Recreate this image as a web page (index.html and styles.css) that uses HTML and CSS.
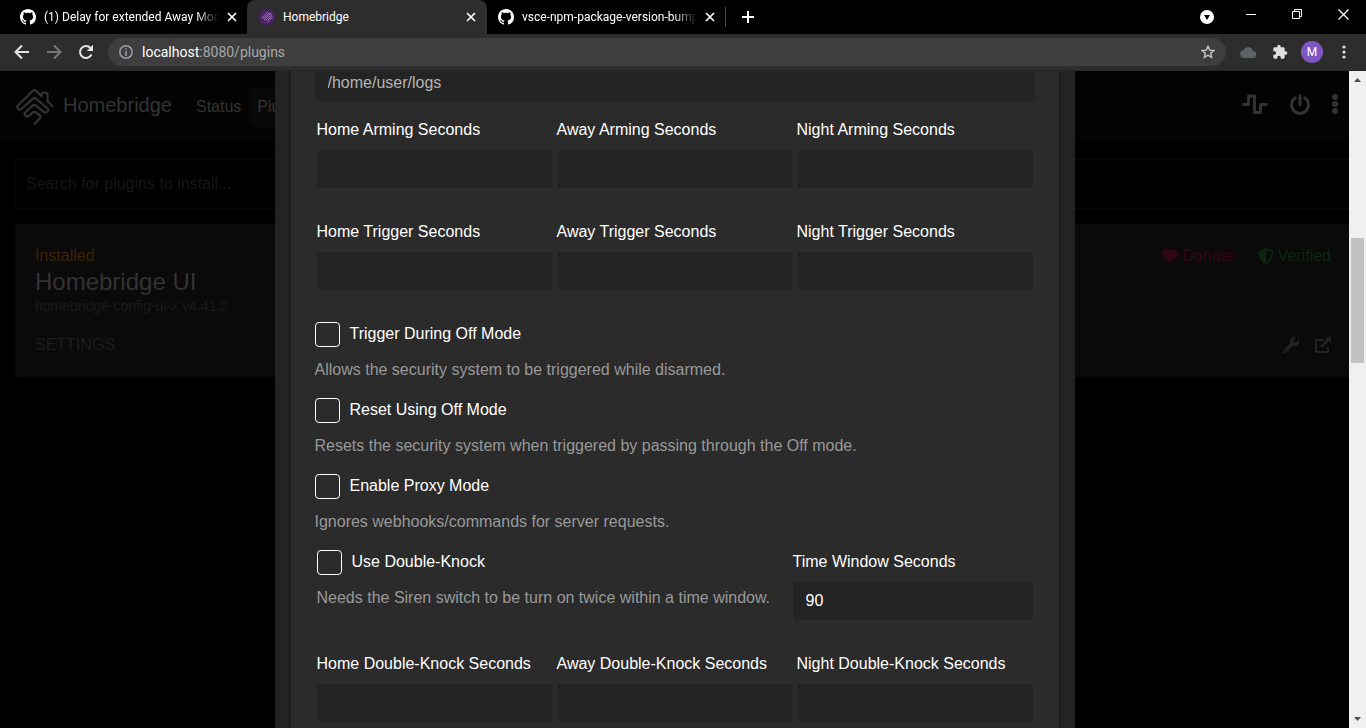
FILE: index.html
```html
<!DOCTYPE html>
<html lang="en">
<head>
<meta charset="utf-8">
<title>Homebridge</title>
<link rel="stylesheet" href="styles.css">
</head>
<body>
<svg class="defs" width="0" height="0" aria-hidden="true">
  <symbol id="github" viewBox="0 0 16 16"><path d="M8 0C3.58 0 0 3.58 0 8c0 3.54 2.29 6.53 5.47 7.59.4.07.55-.17.55-.38 0-.19-.01-.82-.01-1.49-2.01.37-2.53-.49-2.69-.94-.09-.23-.48-.94-.82-1.13-.28-.15-.68-.52-.01-.53.63-.01 1.08.58 1.23.82.72 1.21 1.87.87 2.33.66.07-.52.28-.87.51-1.07-1.78-.2-3.64-.89-3.64-3.95 0-.87.31-1.59.82-2.15-.08-.2-.36-1.02.08-2.12 0 0 .67-.21 2.2.82.64-.18 1.32-.27 2-.27s1.36.09 2 .27c1.53-1.04 2.2-.82 2.2-.82.44 1.1.16 1.92.08 2.12.51.56.82 1.27.82 2.15 0 3.07-1.87 3.75-3.65 3.95.29.25.54.73.54 1.48 0 1.07-.01 1.93-.01 2.2 0 .21.15.46.55.38A8.01 8.01 0 0 0 16 8c0-4.42-3.58-8-8-8z" fill="currentColor"/></symbol>
  <symbol id="close" viewBox="0 0 10 10"><path d="M1 1l8 8M9 1L1 9" stroke="currentColor" stroke-width="1.7" fill="none"/></symbol>
  <symbol id="homebridge" viewBox="0 0 38 38"><path d="M36.5 18.3L31.5 13.2V6.8Q31.5 4.7 29.4 4.7H27.6Q25.5 4.7 25.5 6.8V8.3M25.5 8.3L20.2 3Q18.4 1.2 16.6 3L2.2 17.2Q.3 19 2.1 20.8Q4 22.6 5.8 20.8L16.6 10.9Q18.4 9.2 20.2 10.9L31.2 20.2Q33.2 22 31.4 23.8Q29.7 25.4 27.7 23.8L20.2 17.6Q18.4 16 16.6 17.6L9.6 24Q7.7 25.8 9.4 27.6Q11.2 29.3 13.1 27.6L16.6 24.6Q18.4 23 20.2 24.6L23.7 27.4Q25.3 28.8 23.7 30.5L18.6 36" fill="none" stroke="currentColor" stroke-width="2.2" stroke-linecap="round" stroke-linejoin="round"/></symbol>
</svg>

<div class="browser">
  <header class="tabstrip">
    <div class="tab">
      <svg class="favicon"><use href="#github"/></svg>
      <span class="tab-title faded">(1) Delay for extended Away Mod</span>
      <button class="tab-close" aria-label="Close tab"><svg><use href="#close"/></svg></button>
    </div>
    <div class="tab tab-active">
      <svg class="favicon" viewBox="0 0 16 16"><circle cx="8" cy="8" r="8" fill="#4b2167"/><svg x="3" y="3" width="11" height="11" class="favicon-mark"><use href="#homebridge"/></svg></svg>
      <span class="tab-title">Homebridge</span>
      <button class="tab-close" aria-label="Close tab"><svg><use href="#close"/></svg></button>
    </div>
    <div class="tab">
      <svg class="favicon"><use href="#github"/></svg>
      <span class="tab-title faded">vsce-npm-package-version-bump</span>
      <button class="tab-close" aria-label="Close tab"><svg><use href="#close"/></svg></button>
    </div>
    <button class="new-tab" aria-label="New tab"><svg width="12" height="12"><path d="M6 0v12M0 6h12" stroke="#fff" stroke-width="2"/></svg></button>
    <div class="window-controls">
      <button aria-label="Search tabs"><svg width="14" height="14"><circle cx="7" cy="7" r="7" fill="#fff"/><path d="M4 5h6L7 10z" fill="#000"/></svg></button>
      <button aria-label="Minimize"><svg width="10" height="10"><path d="M0 5.500h10" stroke="#fff"/></svg></button>
      <button aria-label="Restore"><svg width="10" height="10"><path d="M.5 2.500h7v7h-7zM2.500 2.500v-2h7v7h-2" fill="none" stroke="#fff"/></svg></button>
      <button aria-label="Close window"><svg width="11" height="11"><path d="M.5.5l10 10M10.500.5l-10 10" stroke="#fff" stroke-width="1.200"/></svg></button>
    </div>
  </header>

  <div class="toolbar">
    <button class="tool" aria-label="Back"><svg width="16" height="16"><path d="M15 8H2M8 1.500L1.500 8 8 14.500" fill="none" stroke="#e4e4e4" stroke-width="2"/></svg></button>
    <button class="tool" aria-label="Forward"><svg width="16" height="16"><path d="M1 8h13M8 1.500L14.500 8 8 14.500" fill="none" stroke="#777" stroke-width="2"/></svg></button>
    <button class="tool" aria-label="Reload"><svg width="16" height="16"><path d="M13.500 10.500A6 6 0 1 1 12.500 4" fill="none" stroke="#e4e4e4" stroke-width="2"/><path d="M15 .8V7H8.800z" fill="#e4e4e4"/></svg></button>
    <div class="omnibox">
      <svg width="14" height="14"><circle cx="7" cy="7" r="6.200" fill="none" stroke="#9aa0a6" stroke-width="1.500"/><path d="M7 6v5M7 3.200v1.600" stroke="#9aa0a6" stroke-width="1.500"/></svg>
      <span class="url"><span class="host">localhost</span>:8080/plugins</span>
      <button aria-label="Bookmark this tab"><svg width="14" height="14" viewBox="0 0 14 14"><path d="M7 1.300l1.700 3.800 4.100.4-3.100 2.700.9 4.100L7 10.200l-3.600 2.100.9-4.100L1.200 5.500l4.100-.4z" fill="none" stroke="#c8c8c8" stroke-width="1.400"/></svg></button>
    </div>
    <div class="extensions">
      <button class="tool" aria-label="Cloud extension"><svg width="16" height="12" viewBox="0 0 16 12"><path d="M4 12a4 4 0 0 1-.6-7.900A5 5 0 0 1 12.800 5 3.500 3.500 0 0 1 12.500 12z" fill="#5f6368"/></svg></button>
      <button class="tool" aria-label="Extensions"><svg width="16" height="16" viewBox="0 0 24 24"><path d="M20.500 11H19V7a2 2 0 0 0-2-2h-4V3.500a2.500 2.500 0 0 0-5 0V5H4a2 2 0 0 0-2 2v3.800h1.500a2.700 2.700 0 0 1 0 5.400H2V20a2 2 0 0 0 2 2h3.800v-1.500a2.700 2.700 0 0 1 5.400 0V22H17a2 2 0 0 0 2-2v-4h1.500a2.500 2.500 0 0 0 0-5z" fill="#e0e0e0"/></svg></button>
      <button class="tool avatar" aria-label="Profile">M</button>
      <button class="tool" aria-label="Menu"><svg width="4" height="14"><circle cx="2" cy="2" r="1.600" fill="#e0e0e0"/><circle cx="2" cy="7" r="1.600" fill="#e0e0e0"/><circle cx="2" cy="12" r="1.600" fill="#e0e0e0"/></svg></button>
    </div>
  </div>

  <div class="viewport">
    <div class="page">
      <nav class="navbar">
        <svg class="brand-mark"><use href="#homebridge"/></svg>
        <a class="brand" href="#">Homebridge</a>
        <a class="nav-link" href="#">Status</a>
        <a class="nav-link nav-current" href="#">Plugins</a>
        <div class="nav-icons">
          <button aria-label="Logs"><svg width="26" height="20"><path d="M1.500 10.500h5V2h6v16.500h6v-8h6" fill="none" stroke="currentColor" stroke-width="2.800" stroke-linejoin="round" stroke-linecap="round"/></svg></button>
          <button aria-label="Restart"><svg width="20" height="21"><path d="M5.400 3.800a8.500 8.500 0 1 0 9.200 0" fill="none" stroke="currentColor" stroke-width="2.800" stroke-linecap="round"/><path d="M10 1.500v9" stroke="currentColor" stroke-width="3" stroke-linecap="round"/></svg></button>
          <button aria-label="More"><svg width="6" height="20"><circle cx="3" cy="3" r="3" fill="currentColor"/><circle cx="3" cy="10" r="3" fill="currentColor"/><circle cx="3" cy="17" r="3" fill="currentColor"/></svg></button>
        </div>
      </nav>
      <main class="content">
        <input class="search" type="text" placeholder="Search for plugins to install..." aria-label="Search for plugins to install">
        <article class="plugin">
          <div class="plugin-info">
            <span class="installed">Installed</span>
            <h2>Homebridge UI</h2>
            <span class="package">homebridge-config-ui-x v4.41.2</span>
            <a class="settings" href="#">SETTINGS</a>
          </div>
          <div class="plugin-side">
            <div class="badges">
              <a class="donate" href="#"><svg width="16" height="16" viewBox="0 0 512 512"><path d="M462 62c-55-46-136-38-186 14l-20 20-20-20C186 24 105 16 50 62c-63 54-66 150-10 208l193 200c12 13 32 13 45 0l193-200c57-58 54-154-9-208z" fill="currentColor"/></svg>Donate</a>
              <span class="verified"><svg width="16" height="16" viewBox="0 0 512 512"><path d="M466 83L274 3c-11-4-25-4-36 0L46 83c-18 8-30 25-30 45 0 198 114 335 222 380 11 5 25 5 36 0 87-36 222-159 222-380 0-20-12-37-30-45zM256 446V66l176 73c-4 152-82 263-176 307z" fill="currentColor"/></svg>Verified</span>
            </div>
            <div class="actions">
              <button aria-label="Plugin tools"><svg width="16" height="16" viewBox="0 0 512 512"><path d="M508 110c-2-9-13-12-20-5l-74 74-68-11-11-68 74-74c7-7 4-18-5-20A144 144 0 0 0 233 193L19 407a64 64 0 1 0 91 91l213-213a144 144 0 0 0 185-175zM64 472a24 24 0 1 1 0-48 24 24 0 0 1 0 48z" fill="currentColor"/></svg></button>
              <button aria-label="Open plugin page"><svg width="16" height="16"><path d="M9 3H1v12h12v-5" fill="none" stroke="currentColor" stroke-width="2"/><path d="M10 0h6v6l-2-2-7 7-2-2 7-7z" fill="currentColor"/></svg></button>
            </div>
          </div>
        </article>
      </main>

      <div class="modal-layer">
        <section class="modal" aria-label="Plugin settings">
          <form class="panel">
            <input class="field path" type="text" placeholder="/home/user/logs" aria-label="Log path">
            <div class="trio">
              <label>Home Arming Seconds<input class="field" type="text"></label>
              <label>Away Arming Seconds<input class="field" type="text"></label>
              <label>Night Arming Seconds<input class="field" type="text"></label>
            </div>
            <div class="trio">
              <label>Home Trigger Seconds<input class="field" type="text"></label>
              <label>Away Trigger Seconds<input class="field" type="text"></label>
              <label>Night Trigger Seconds<input class="field" type="text"></label>
            </div>
            <div class="option">
              <label class="check"><input type="checkbox">Trigger During Off Mode</label>
              <p>Allows the security system to be triggered while disarmed.</p>
            </div>
            <div class="option">
              <label class="check"><input type="checkbox">Reset Using Off Mode</label>
              <p>Resets the security system when triggered by passing through the Off mode.</p>
            </div>
            <div class="option">
              <label class="check"><input type="checkbox">Enable Proxy Mode</label>
              <p>Ignores webhooks/commands for server requests.</p>
            </div>
            <div class="knock">
              <div>
                <label class="check"><input type="checkbox">Use Double-Knock</label>
                <p>Needs the Siren switch to be turn on twice within a time window.</p>
              </div>
              <label>Time Window Seconds<input class="field" type="text" value="90"></label>
            </div>
            <div class="trio">
              <label>Home Double-Knock Seconds<input class="field" type="text"></label>
              <label>Away Double-Knock Seconds<input class="field" type="text"></label>
              <label>Night Double-Knock Seconds<input class="field" type="text"></label>
            </div>
          </form>
        </section>
      </div>
    </div>

    <div class="scrollbar" aria-hidden="true">
      <svg width="7" height="4"><path d="M0 4h7L3.500 0z" fill="#505050"/></svg>
      <div class="track"><div class="thumb"></div></div>
      <svg width="7" height="4"><path d="M0 0h7L3.500 4z" fill="#505050"/></svg>
    </div>
  </div>
</div>
</body>
</html>
```
FILE: styles.css
```css
* { box-sizing: border-box; }
body {
  margin: 0;
  background: #000;
  font: 16px/24px "Liberation Sans", Arial, sans-serif;
}
button {
  padding: 0;
  border: 0;
  background: none;
  color: inherit;
  font: inherit;
  display: flex;
  align-items: center;
  justify-content: center;
}
a { color: inherit; text-decoration: none; }
svg { display: block; flex: none; }
p, h2 { margin: 0; font-weight: 400; }
.defs { position: absolute; }

.browser { height: 100vh; display: flex; flex-direction: column; overflow: hidden; }

/* Tab strip */
.tabstrip {
  flex: none;
  display: flex;
  height: 34px;
  padding-left: 8px;
  background: #000;
  color: #fff;
  font: 12px/16px Roboto, "Noto Sans", sans-serif;
}
.tab {
  display: flex;
  align-items: center;
  width: 239px;
  padding: 0 7px 0 12px;
}
.tab-active { background: #2d2d2d; border-radius: 8px 8px 0 0; padding-right: 8px; width: 240px; }
.tab-active + .tab { width: 238px; padding-left: 11px; }
.favicon { width: 16px; height: 16px; margin-right: 8px; }
.favicon-mark { color: #cbb4d8; }
.tab-title { flex: 1; min-width: 0; overflow: hidden; white-space: nowrap; }
.faded {
  -webkit-mask-image: linear-gradient(to left, transparent, #000 24px);
  mask-image: linear-gradient(to left, transparent, #000 24px);
}
.tab-close { width: 16px; height: 16px; margin-left: 5px; }
.tab-close svg { width: 10px; height: 10px; }
.new-tab { width: 44px; height: 20px; margin-top: 7px; border-left: 1px solid #4a4a4a; }
.window-controls { margin-left: auto; display: flex; height: 28px; }
.window-controls button { width: 46px; }
.window-controls button:first-child { width: 42px; padding-top: 5px; }

/* Toolbar */
.toolbar {
  flex: none;
  display: flex;
  align-items: center;
  height: 37px;
  padding: 0 6px;
  background: #2d2d2d;
  border-bottom: 1px solid #262626;
}
.tool { width: 32px; height: 28px; }
.omnibox {
  flex: 1;
  display: flex;
  align-items: center;
  gap: 9px;
  height: 28px;
  margin: 0 6px;
  padding: 0 11px;
  border-radius: 14px;
  background: #3e3e3e;
  color: #a5a8ab;
  font: 14px/20px Roboto, "Noto Sans", sans-serif;
}
.url { flex: 1; }
.host { color: #fff; }
.extensions { display: flex; align-items: center; }
.avatar {
  width: 22px;
  height: 22px;
  margin: 0 5px;
  border-radius: 50%;
  background: #7e57c2;
  color: #fff;
  font: 12px/22px Roboto, sans-serif;
}

/* Plugin page, dimmed by the modal backdrop */
.viewport { flex: 1; min-height: 0; display: flex; }
.page { flex: 1; position: relative; overflow: hidden; background: #000; }
.navbar {
  display: flex;
  align-items: center;
  height: 71px;
  padding: 0 11px 0 16px;
  background: #030303;
  color: #333;
}
.brand-mark { width: 38px; height: 38px; margin-right: 9px; }
.brand { margin-right: 16px; padding-bottom: 4px; font-size: 20px; }
.nav-link { padding: 8px; }
.nav-current { background: #080808; }
.nav-icons { margin-left: auto; display: flex; align-items: center; gap: 22px; margin-bottom: 5px; }
.content { padding: 17px 0 0 15px; }
.search {
  display: block;
  width: 100%;
  height: 50px;
  padding: 0 10px;
  border: 1px solid #0a0a0a;
  border-right: 0;
  background: #000;
  color: #333;
  font: inherit;
}
.search::placeholder { color: #171717; opacity: 1; }
.plugin {
  display: flex;
  justify-content: space-between;
  margin-top: 15px;
  padding: 20px 18px 20px 20px;
  border-radius: 4px 0 0 4px;
  background: #0a0a0a;
}
.plugin-info, .plugin-side { display: flex; flex-direction: column; }
.installed { color: #3d2205; }
.plugin h2 { color: #333; font-size: 24px; line-height: 28px; }
.package { color: #1a1a1a; font-size: 14px; line-height: 21px; }
.settings { margin-top: 16px; color: #1d1d1d; }
.plugin-side { justify-content: space-between; align-items: flex-end; color: #222; }
.badges { display: flex; gap: 24px; }
.donate, .verified { display: flex; align-items: center; gap: 4px; }
.donate { color: #330614; }
.verified { color: #0d260f; }
.actions { display: flex; gap: 16px; height: 24px; }

/* Settings modal */
.modal-layer {
  position: absolute;
  inset: 0;
  display: flex;
  justify-content: center;
  overflow: hidden;
}
.modal {
  width: 800px;
  max-width: 100%;
  height: max-content;
  padding: 0 16px;
  background: #232323;
}
.panel {
  margin-top: -7px;
  padding: 0 24px 24px;
  background: #2b2b2b;
  box-shadow: 0 2px 6px rgba(0, 0, 0, .3);
  color: #fff;
}
.field {
  display: block;
  width: 100%;
  height: 38px;
  padding: 0 13px;
  border: 0;
  border-radius: 4px;
  background: #242424;
  color: #fff;
  font: inherit;
}
label .field { margin-top: 8px; }
.path { margin-bottom: 16px; }
.path::placeholder { color: #b5b5b5; opacity: 1; }
.trio {
  display: grid;
  grid-template-columns: repeat(3, 1fr);
  gap: 4px;
  padding: 0 2px;
  margin-bottom: 32px;
}
.check { display: flex; align-items: center; gap: 10px; height: 24px; }
.check input {
  appearance: none;
  flex: none;
  width: 25px;
  height: 25px;
  margin: 1px 0 0;
  border: 1px solid #fff;
  border-radius: 4px;
}
.option { margin-bottom: 16px; }
.option p, .knock p { margin-top: 12px; color: #999; }
.knock {
  display: grid;
  grid-template-columns: 1fr 240px;
  padding: 0 2px;
  margin-bottom: 32px;
}

/* Page scrollbar */
.scrollbar {
  flex: none;
  display: flex;
  flex-direction: column;
  align-items: center;
  width: 17px;
  padding: 7px 0;
  background: #f0f0f0;
}
.track { flex: 1; width: 13px; }
.thumb { height: 125px; margin-top: 156px; background: #c1c1c1; }
```
